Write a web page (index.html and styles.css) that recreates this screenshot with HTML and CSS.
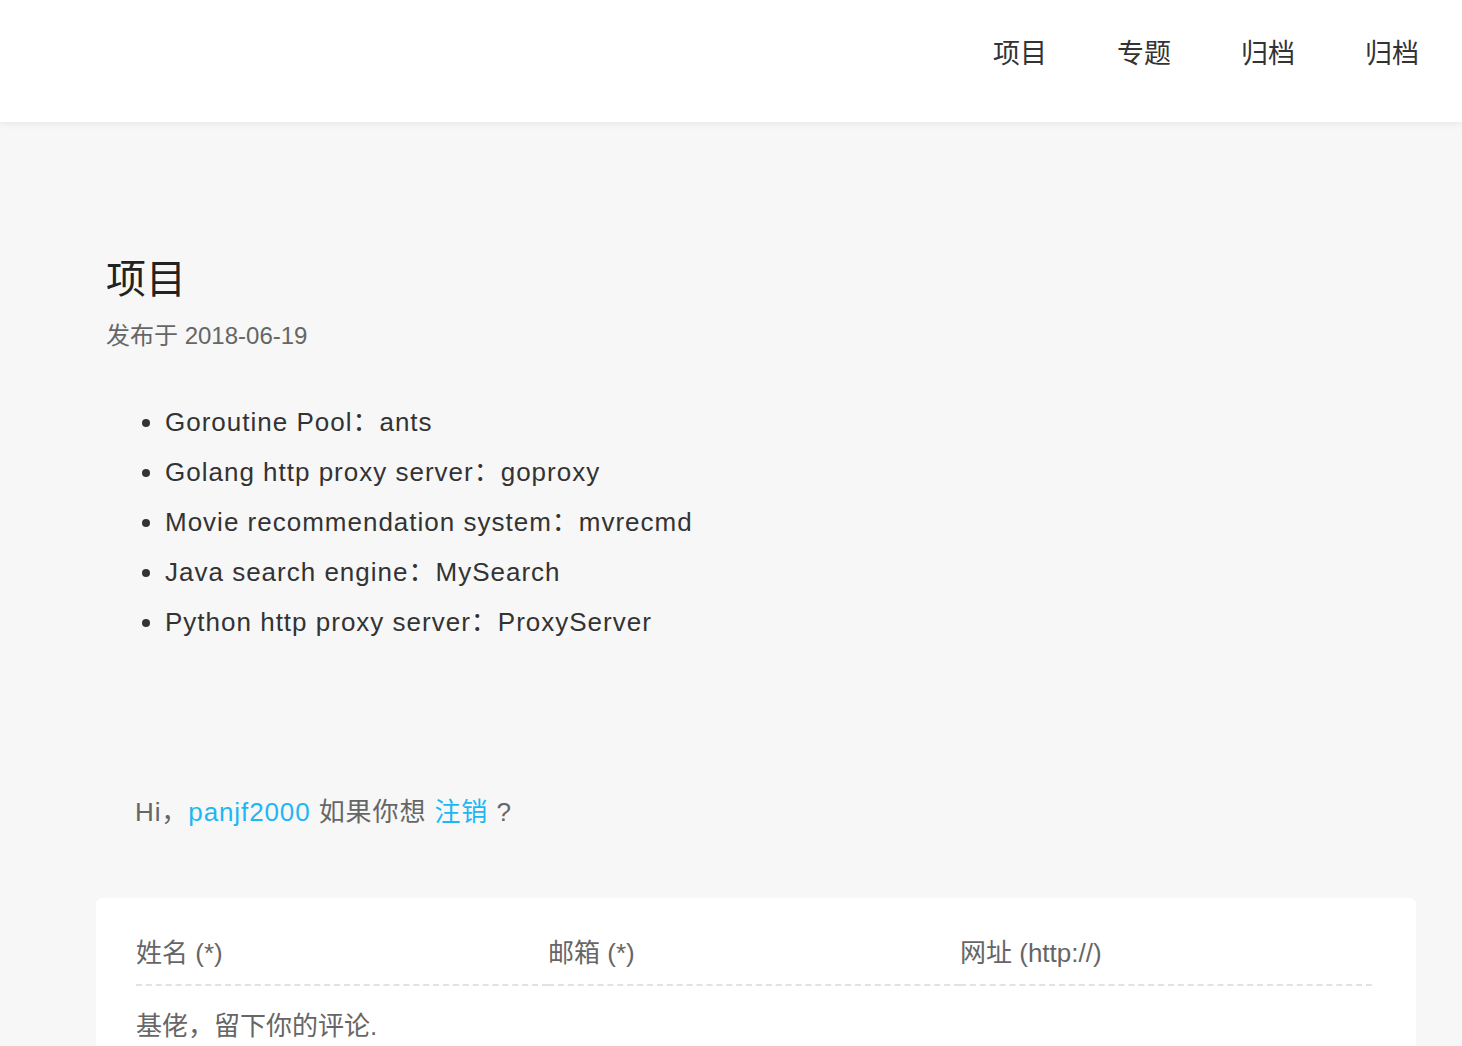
FILE: index.html
```html
<!DOCTYPE html>
<html lang="zh-CN">
<head>
  <meta charset="UTF-8">
  <title>项目</title>
  <meta name="viewport" content="width=device-width, initial-scale=1.0">
  <link rel="stylesheet" href="styles.css">
</head>
<body>
  <header class="site-header">
    <nav class="nav">
      <a href="#">项目</a>
      <a href="#">专题</a>
      <a href="#">归档</a>
      <a href="#">归档</a>
    </nav>
  </header>

  <main class="container">
    <article class="post">
      <h1 class="post-title">项目</h1>
      <p class="post-meta">发布于 2018-06-19</p>
      <ul class="post-list">
        <li>Goroutine Pool：ants</li>
        <li>Golang http proxy server：goproxy</li>
        <li>Movie recommendation system：mvrecmd</li>
        <li>Java search engine：MySearch</li>
        <li>Python http proxy server：ProxyServer</li>
      </ul>
    </article>

    <p class="login-info">Hi，<a href="#">panjf2000</a> 如果你想 <a href="#">注销</a> ?</p>

    <form class="comment-box">
      <div class="comment-fields">
        <input type="text" placeholder="姓名 (*)">
        <input type="text" placeholder="邮箱 (*)">
        <input type="text" placeholder="网址 (http://)">
      </div>
      <textarea placeholder="基佬，留下你的评论."></textarea>
    </form>
  </main>
</body>
</html>
```

FILE: styles.css
```css
body {
  margin: 0;
  padding: 0;
  background-color: #f7f7f7;
  font-family: "Liberation Sans", "Noto Sans CJK SC", sans-serif;
  color: #333;
}

a {
  text-decoration: none;
}

.site-header {
  height: 122px;
  background-color: #fff;
  box-shadow: 0 1px 8px rgba(0, 0, 0, 0.08);
  display: flex;
  justify-content: flex-end;
  align-items: center;
  padding-right: 43px;
}

.nav {
  display: flex;
  gap: 70px;
  margin-bottom: 20px;
}

.nav a {
  color: #333;
  font-size: 27px;
}

.container {
  width: 1320px;
  margin: 0 0 0 96px;
  padding-top: 133px;
}

.post {
  padding-left: 10px;
}

.post-title {
  font-size: 40px;
  font-weight: normal;
  line-height: 48px;
  margin: 0;
  color: #222;
}

.post-meta {
  font-size: 24px;
  line-height: 36px;
  color: #666;
  margin: 15px 0 0;
}

.post-list {
  margin: 43px 0 0;
  padding-left: 59px;
  font-size: 26px;
  line-height: 50px;
  letter-spacing: 1px;
}

.login-info {
  font-size: 26px;
  line-height: 40px;
  color: #666;
  margin: 145px 0 0;
  padding-left: 39px;
  letter-spacing: 0.9px;
}

.login-info a {
  color: #1eb7f3;
}

.comment-box {
  margin-top: 66px;
  background-color: #fff;
  border-radius: 6px;
  padding: 24px 44px 0 40px;
  height: 200px;
}

.comment-fields {
  display: grid;
  grid-template-columns: repeat(3, 1fr);
}

.comment-fields input,
.comment-box textarea {
  font-family: inherit;
  font-size: 26px;
  color: #333;
  border: none;
  outline: none;
  background: transparent;
  padding: 0;
}

.comment-fields input {
  height: 64px;
  border-bottom: 2px dashed #e2e2e2;
  box-sizing: border-box;
}

.comment-box textarea {
  display: block;
  width: 100%;
  margin-top: 21px;
  line-height: 38px;
  height: 120px;
  resize: none;
}

::placeholder {
  color: #666;
  opacity: 1;
}
```
